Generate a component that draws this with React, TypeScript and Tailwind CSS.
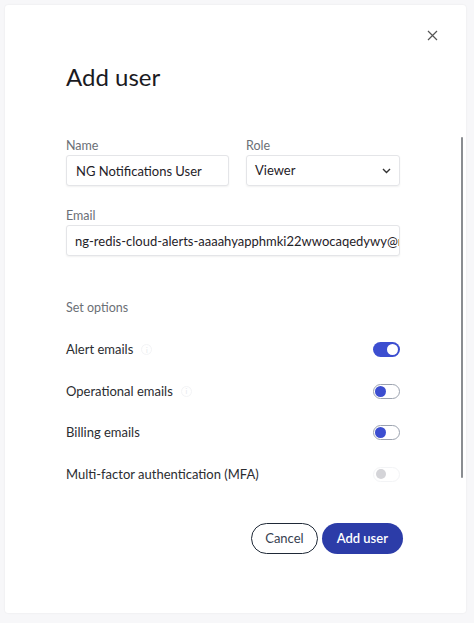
import React from 'react';

function Toggle({ on = false, disabled = false }: { on?: boolean; disabled?: boolean }) {
  if (disabled) {
    return (
      <div className="w-[27px] h-[15px] rounded-full bg-white border border-gray-100 flex items-center px-[2px]">
        <div className="w-[10px] h-[10px] rounded-full bg-[#d4d4d8]" />
      </div>
    );
  }
  if (on) {
    return (
      <div className="w-[27px] h-[15px] rounded-full bg-[#3c4ed0] flex items-center justify-end px-[2px]">
        <div className="w-[11px] h-[11px] rounded-full bg-white" />
      </div>
    );
  }
  return (
    <div className="w-[27px] h-[15px] rounded-full bg-white border border-[#9ca3af] flex items-center px-[1px]">
      <div className="w-[11px] h-[11px] rounded-full bg-[#3c4ed0]" />
    </div>
  );
}

function InfoDot() {
  return (
    <span className="ml-2 inline-flex w-[11px] h-[11px] items-center justify-center rounded-full border border-gray-100 text-[7px] text-gray-200">
      i
    </span>
  );
}

const options = [
  { label: 'Alert emails', on: true, info: true },
  { label: 'Operational emails', on: false, info: true },
  { label: 'Billing emails', on: false, info: false },
  { label: 'Multi-factor authentication (MFA)', on: false, info: false, disabled: true },
];

const fieldCls =
  'mt-[1px] w-full h-[31px] border border-[#e4e5e8] rounded-[3px] shadow-[0_1px_2px_rgba(0,0,0,0.06)] px-[9px] text-[13px] text-[#1f2228] bg-white outline-none';

export default function App() {
  return (
    <div
      className="w-[474px] h-[623px] bg-[#f7f7f9] p-[5px] pr-[8px] pb-[10px]"
      style={{ fontFamily: 'Lato, "Open Sans", sans-serif' }}
    >
      <div className="relative h-full bg-white rounded-[3px] shadow-[0_0_2px_rgba(0,0,0,0.08)] flex">
        {/* Body */}
        <div className="flex-1 min-w-0 pl-[61px] pr-[66px] pt-[22px]">
          <div className="flex justify-end -mr-[40px]">
            <button className="w-4 h-4 flex items-center justify-center text-[#555]">
              <svg width="11" height="11" viewBox="0 0 11 11" fill="none" stroke="currentColor" strokeWidth="1.2">
                <path d="M1 1L10 10M10 1L1 10" />
              </svg>
            </button>
          </div>

          <h2 className="mt-[19px] text-[24px] leading-[30px] text-[#1b1b1f] font-normal">Add user</h2>

          {/* Name / Role */}
          <div className="mt-[46px] flex gap-[17px]">
            <div className="w-[163px]">
              <div className="text-[12.5px] text-[#6b6f76] leading-[16px]">Name</div>
              <input className={fieldCls} readOnly value="NG Notifications User" />
            </div>
            <div className="flex-1">
              <div className="text-[12.5px] text-[#6b6f76] leading-[16px]">Role</div>
              <div className="mt-[1px] h-[31px] border border-[#e4e5e8] rounded-[3px] shadow-[0_1px_2px_rgba(0,0,0,0.06)] flex items-center justify-between px-[8px] text-[13px] text-[#1f2228]">
                <span>Viewer</span>
                <svg width="9" height="6" viewBox="0 0 9 6" fill="none" stroke="#333" strokeWidth="1.4">
                  <path d="M1 1L4.5 4.5L8 1" />
                </svg>
              </div>
            </div>
          </div>

          {/* Email */}
          <div className="mt-[22px]">
            <div className="text-[12.5px] text-[#6b6f76] leading-[16px]">Email</div>
            <input
              className={fieldCls + ' pl-[8px] pr-0'}
              readOnly
              value="ng-redis-cloud-alerts-aaaahyapphmki22wwocaqedywy@redis.com"
            />
          </div>

          {/* Options */}
          <div className="mt-[44px] text-[12.5px] text-[#6b6f76] leading-[16px]">Set options</div>
          <div className="mt-[13px] flex flex-col">
            {options.map((o) => (
              <div key={o.label} className="h-[41.5px] flex items-center justify-between">
                <span className="text-[13px] text-[#2b2d31] flex items-center">
                  {o.label}
                  {o.info && <InfoDot />}
                </span>
                <Toggle on={o.on} disabled={o.disabled} />
              </div>
            ))}
          </div>

          {/* Buttons */}
          <div className="mt-[28px] flex justify-end gap-[4px] -mr-[3px]">
            <button className="h-[31px] px-[13px] rounded-full border border-[#1f2937] bg-white text-[13px] text-[#374151]">
              Cancel
            </button>
            <button className="h-[31px] px-[15px] rounded-full bg-[#2c3ca8] text-[13px] font-semibold text-white">
              Add user
            </button>
          </div>
        </div>

        {/* Scrollbar */}
        <div className="absolute right-[3px] top-[132px] h-[341px] w-[2px] bg-[#8a8d91] rounded-full" />
      </div>
    </div>
  );
}
